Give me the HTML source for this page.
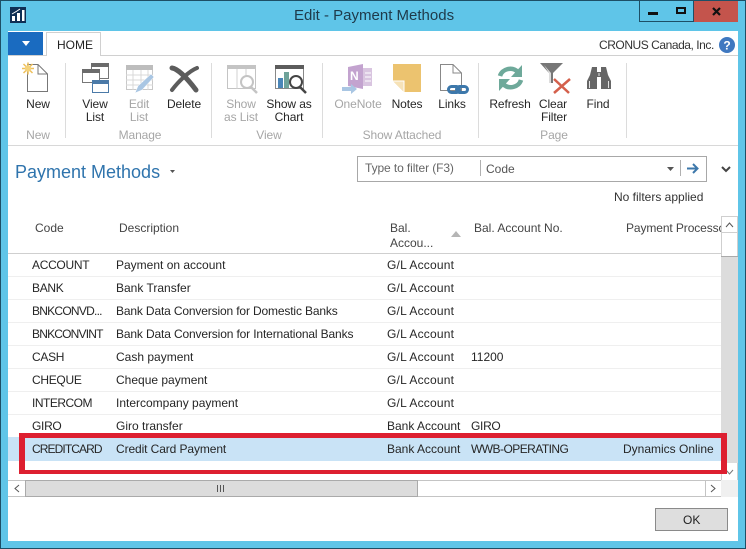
<!DOCTYPE html>
<html><head><meta charset="utf-8"><style>
html,body{margin:0;padding:0;width:746px;height:549px;overflow:hidden;background:#5fc5e8}
body{position:relative;font-family:"Liberation Sans",sans-serif;font-size:12px;color:#262626}
.a{position:absolute}
.t{position:absolute;white-space:nowrap;line-height:14px}
.c{position:absolute;white-space:nowrap;line-height:14px;text-align:center;transform:translateX(-50%);letter-spacing:-.1px}
.g{color:#a6a6a6}
.h{color:#444}
.r{position:absolute;left:8px;width:713px;height:1px;background:#efefef}
svg{position:absolute;overflow:visible}
</style></head><body>
<div class="a" style="left:0;top:0;width:744px;height:547px;border:1px solid #1d4f66"></div>
<div class="a" style="left:8px;top:31px;width:730px;height:510px;background:#fff"></div>

<svg style="left:10px;top:7px" width="16" height="16"><rect width="16" height="16" fill="#0f2f55"/><path d="M2 14V9H5V14ZM7 14V6H10V14ZM12 14V3H14.500V14Z" fill="#fff"/><path d="M2 7L7 4L10 2" stroke="#fff" fill="none"/></svg>
<div class="t" style="left:294px;top:7px;font-size:15px;line-height:18px;color:#1e3a4a">Edit - Payment Methods</div>

<div class="a" style="left:639px;top:1px;width:29px;height:20px;border:1px solid #1d4f66;border-top:0;background:#5fc5e8"></div>
<div class="a" style="left:648px;top:12px;width:10px;height:3px;background:#111"></div>
<div class="a" style="left:667px;top:1px;width:26px;height:20px;border:1px solid #1d4f66;border-top:0;border-left:0;background:#5fc5e8"></div>
<div class="a" style="left:676px;top:7px;width:6px;height:3px;border:2px solid #111"></div>
<div class="a" style="left:694px;top:1px;width:44px;height:21px;background:#c4544c"></div>
<svg style="left:712px;top:7px" width="9" height="9"><path d="M1 1L8 8M8 1L1 8" stroke="#111" stroke-width="2.200"/></svg>

<div class="a" style="left:8px;top:32px;width:35px;height:23px;background:#1a6bc0"></div>
<svg style="left:22px;top:41px" width="9" height="6"><path d="M0 0H8L4 5Z" fill="#fff"/></svg>
<div class="a" style="left:46px;top:32px;width:55px;height:24px;box-sizing:border-box;border:1px solid #d0d0d0;border-bottom:0;background:#fff;z-index:2"></div>
<div class="t" style="left:57px;top:38px;z-index:3;color:#222">HOME</div>
<div class="a" style="left:8px;top:55px;width:730px;height:1px;background:#d0d0d0"></div>
<div class="t" style="left:599px;top:38px;color:#333;letter-spacing:-.45px">CRONUS Canada, Inc.</div>
<svg style="left:719px;top:37px" width="16" height="16"><circle cx="8" cy="8" r="8" fill="#3f78c0"/><text x="8" y="12.500" font-size="12" font-weight="bold" fill="#fff" text-anchor="middle" font-family="Liberation Sans">?</text></svg>
<div class="a" style="left:8px;top:145px;width:730px;height:1px;background:#d8d8d8"></div>

<div class="a" style="left:65px;top:63px;width:1px;height:75px;background:#dcdcdc"></div>
<div class="a" style="left:211px;top:63px;width:1px;height:75px;background:#dcdcdc"></div>
<div class="a" style="left:322px;top:63px;width:1px;height:75px;background:#dcdcdc"></div>
<div class="a" style="left:478px;top:63px;width:1px;height:75px;background:#dcdcdc"></div>
<div class="a" style="left:626px;top:63px;width:1px;height:75px;background:#dcdcdc"></div>

<!-- New -->
<svg style="left:22px;top:62px" width="27" height="31"><path d="M5.500 2.500H16L25.500 12V29.500H5.500Z" fill="#fff" stroke="#777"/><path d="M16 2.500V12H25.500" fill="none" stroke="#777"/><g stroke="#eebf5a" stroke-width="1.500"><path d="M0 6.500H12M6 0.500V12.500M1.500 2L10.500 11M10.500 2L1.500 11"/></g><circle cx="6" cy="6.500" r="3.200" fill="#f4d27a"/></svg>
<!-- View List -->
<svg style="left:81px;top:62px" width="29" height="32"><rect x="10.500" y="1.500" width="17" height="15" fill="#fff" stroke="#777"/><rect x="10" y="1" width="18" height="4" fill="#6b6b6b"/><rect x="1.500" y="7.500" width="17" height="13" fill="#fff" stroke="#777"/><rect x="1" y="7" width="18" height="4" fill="#6b6b6b"/><rect x="11.500" y="18.500" width="16" height="12" fill="#fff" stroke="#4b7aa8"/><rect x="11" y="18" width="17" height="4" fill="#4b7aa8"/></svg>
<!-- Edit List -->
<svg style="left:125px;top:64px" width="30" height="30"><rect x="1.500" y="1.500" width="26" height="24" fill="#fff" stroke="#c8c8c8"/><rect x="1" y="1" width="27" height="5" fill="#bdbdbd"/><path d="M1 11H28M1 16H28M1 21H28M8 6V26M16 6V26M23 6V26" stroke="#d9d9d9"/><path d="M10 29L13 22L26 10L29 13L17 26Z" fill="#a9c6e3" stroke="#fff" stroke-width=".5"/></svg>
<!-- Delete -->
<svg style="left:170px;top:65px" width="29" height="27"><path d="M2 3C9 4 20 17 26 25" stroke="#5c5c5c" stroke-width="5" fill="none" stroke-linecap="round"/><path d="M27 3C19 6 8 17 2 25" stroke="#5c5c5c" stroke-width="4" fill="none" stroke-linecap="round"/></svg>
<!-- Show as List -->
<svg style="left:227px;top:64px" width="32" height="30"><rect x="0.500" y="1.500" width="28" height="23" fill="#fff" stroke="#c4c4c4"/><rect x="0" y="1" width="29" height="4" fill="#c4c4c4"/><path d="M10 5V25M19 5V25" stroke="#d0d0d0"/><circle cx="20" cy="18" r="6" fill="#fff" stroke="#c4c4c4" stroke-width="2"/><path d="M24 23L30 29" stroke="#c4c4c4" stroke-width="2.500"/></svg>
<!-- Show as Chart -->
<svg style="left:275px;top:64px" width="32" height="30"><rect x="0.500" y="1.500" width="28" height="23" fill="#fff" stroke="#888"/><rect x="0" y="1" width="29" height="4" fill="#5c5c5c"/><rect x="3" y="14" width="5" height="10" fill="#4b86b8"/><rect x="9" y="8" width="5" height="16" fill="#6fa39a"/><circle cx="21" cy="18" r="6" fill="#fff" stroke="#444" stroke-width="2"/><path d="M25 23L31 29" stroke="#444" stroke-width="2.500"/></svg>
<!-- OneNote -->
<svg style="left:341px;top:63px" width="32" height="31"><path d="M7 4L22 1V26L7 23Z" fill="#c3a3cf"/><rect x="22" y="5" width="9" height="18" fill="#d9c5e0"/><path d="M24 10H30M24 14H30M24 18H30" stroke="#fff"/><text x="9" y="17" font-size="12" font-weight="bold" fill="#fff" font-family="Liberation Sans">N</text><path d="M1 24H10V21L16 26L10 31V28H1Z" fill="#a9c6e3"/></svg>
<!-- Notes -->
<svg style="left:393px;top:64px" width="28" height="28"><path d="M0 0H28V28H11L0 17Z" fill="#ecc36f"/><path d="M0 17H11V28Z" fill="#f6e2b7"/><path d="M0 17H11V28" fill="none" stroke="#fff"/></svg>
<!-- Links -->
<svg style="left:439px;top:64px" width="30" height="31"><path d="M1.500 0.500H14L22.500 9V26.500H1.500Z" fill="#fff" stroke="#888"/><path d="M14 0.500V9H22.500" fill="none" stroke="#888"/><g fill="none" stroke="#3d78ab" stroke-width="3"><rect x="9.500" y="22.500" width="11" height="6" rx="3"/><rect x="17.500" y="22.500" width="11" height="6" rx="3"/></g></svg>
<!-- Refresh -->
<svg style="left:496px;top:64px" width="29" height="28"><g fill="none" stroke="#6ea99a" stroke-width="4.500"><path d="M4 12C6 5 16 2 22 8"/><path d="M25 16C23 23 13 26 7 20"/></g><path d="M26 1V13H15Z" fill="#6ea99a"/><path d="M3 27V15H14Z" fill="#6ea99a"/></svg>
<!-- Clear Filter -->
<svg style="left:539px;top:62px" width="33" height="33"><path d="M1 1H24L14 11V21H10V11Z" fill="#777"/><path d="M10 11V21H12V11L5 3Z" fill="#ddd"/><path d="M15 17L30 31M31 17L15 31" stroke="#d4604c" stroke-width="2.500"/></svg>
<!-- Find -->
<svg style="left:586px;top:66px" width="26" height="24"><path d="M6 1H11V6H15V1H20L22 9L25 15V23H15V11H11V23H1V15L4 9Z" fill="#666"/><path d="M3.500 15V22M22.500 15V22M13 7V10" stroke="#e2e2e2"/></svg>

<div class="c" style="left:38px;top:97px">New</div>
<div class="c" style="left:95px;top:97px">View</div><div class="c" style="left:95px;top:110px">List</div>
<div class="c g" style="left:139px;top:97px">Edit</div><div class="c g" style="left:139px;top:110px">List</div>
<div class="c" style="left:184px;top:97px">Delete</div>
<div class="c g" style="left:241px;top:97px">Show</div><div class="c g" style="left:241px;top:110px">as List</div>
<div class="c" style="left:289px;top:97px">Show as</div><div class="c" style="left:289px;top:110px">Chart</div>
<div class="c g" style="left:358px;top:97px">OneNote</div>
<div class="c" style="left:407px;top:97px">Notes</div>
<div class="c" style="left:452px;top:97px">Links</div>
<div class="c" style="left:510px;top:97px">Refresh</div>
<div class="c" style="left:553px;top:97px">Clear</div><div class="c" style="left:554px;top:110px">Filter</div>
<div class="c" style="left:598px;top:97px">Find</div>

<div class="c g" style="left:38px;top:128px">New</div>
<div class="c g" style="left:140px;top:128px">Manage</div>
<div class="c g" style="left:269px;top:128px">View</div>
<div class="c g" style="left:402px;top:128px">Show Attached</div>
<div class="c g" style="left:554px;top:128px">Page</div>

<div class="t" style="left:15px;top:161px;font-size:18px;line-height:22px;color:#2f74ad">Payment Methods</div>
<svg style="left:170px;top:170px" width="6" height="4"><path d="M0 0H5L2.500 3Z" fill="#555"/></svg>

<div class="a" style="left:357px;top:156px;width:348px;height:24px;border:1px solid #a8a8a8;background:#fff"></div>
<div class="a" style="left:480px;top:160px;width:1px;height:16px;background:#b0b0b0"></div>
<div class="a" style="left:680px;top:160px;width:1px;height:16px;background:#b0b0b0"></div>
<div class="t" style="left:365px;top:161px;color:#666;letter-spacing:-.1px">Type to filter (F3)</div>
<div class="t" style="left:486px;top:162px;color:#555">Code</div>
<svg style="left:667px;top:167px" width="8" height="5"><path d="M0 0H7L3.500 4Z" fill="#555"/></svg>
<svg style="left:687px;top:163px" width="12" height="11"><path d="M0 5.500H10M6 1L10.500 5.500L6 10" stroke="#3d78ab" stroke-width="2" fill="none"/></svg>
<svg style="left:721px;top:166px" width="10" height="7"><path d="M1 1L5 5L9 1" stroke="#444" stroke-width="2" fill="none"/></svg>
<div class="t" style="left:614px;top:190px;color:#333">No filters applied</div>

<div class="t h" style="left:35px;top:221px">Code</div>
<div class="t h" style="left:119px;top:221px">Description</div>
<div class="t h" style="left:390px;top:221px">Bal.</div>
<div class="t h" style="left:390px;top:236px">Accou...</div>
<svg style="left:451px;top:231px" width="10" height="6"><path d="M0 6L5 0L10 6Z" fill="#b5b5b5"/></svg>
<div class="t h" style="left:474px;top:221px">Bal. Account No.</div>
<div class="a" style="left:626px;top:221px;width:95px;height:14px;overflow:hidden"><div class="t h" style="left:0;top:0;letter-spacing:-.1px">Payment Processor</div></div>
<div class="a" style="left:8px;top:253px;width:713px;height:1px;background:#cfcfcf"></div>

<div class="r" style="top:276px"></div><div class="r" style="top:299px"></div><div class="r" style="top:322px"></div><div class="r" style="top:345px"></div><div class="r" style="top:368px"></div><div class="r" style="top:391px"></div><div class="r" style="top:414px"></div>
<div class="a" style="left:8px;top:437px;width:713px;height:24px;background:#c9e3f6"></div>

<div class="t" style="left:32px;top:258px;letter-spacing:-.3px">ACCOUNT</div><div class="t" style="left:116px;top:258px">Payment on account</div><div class="t" style="left:387px;top:258px;letter-spacing:.2px">G/L Account</div>
<div class="t" style="left:32px;top:281px;letter-spacing:-.3px">BANK</div><div class="t" style="left:116px;top:281px">Bank Transfer</div><div class="t" style="left:387px;top:281px;letter-spacing:.2px">G/L Account</div>
<div class="t" style="left:32px;top:304px;letter-spacing:-.75px">BNKCONVD...</div><div class="t" style="left:116px;top:304px;letter-spacing:-.15px">Bank Data Conversion for Domestic Banks</div><div class="t" style="left:387px;top:304px;letter-spacing:.2px">G/L Account</div>
<div class="t" style="left:32px;top:327px;letter-spacing:-.8px">BNKCONVINT</div><div class="t" style="left:116px;top:327px;letter-spacing:-.14px">Bank Data Conversion for International Banks</div><div class="t" style="left:387px;top:327px;letter-spacing:.2px">G/L Account</div>
<div class="t" style="left:32px;top:350px;letter-spacing:-.3px">CASH</div><div class="t" style="left:116px;top:350px">Cash payment</div><div class="t" style="left:387px;top:350px;letter-spacing:.2px">G/L Account</div><div class="t" style="left:471px;top:350px">11200</div>
<div class="t" style="left:32px;top:373px;letter-spacing:-.3px">CHEQUE</div><div class="t" style="left:116px;top:373px">Cheque payment</div><div class="t" style="left:387px;top:373px;letter-spacing:.2px">G/L Account</div>
<div class="t" style="left:32px;top:396px;letter-spacing:-.5px">INTERCOM</div><div class="t" style="left:116px;top:396px">Intercompany payment</div><div class="t" style="left:387px;top:396px;letter-spacing:.2px">G/L Account</div>
<div class="t" style="left:32px;top:419px;letter-spacing:-.3px">GIRO</div><div class="t" style="left:116px;top:419px">Giro transfer</div><div class="t" style="left:387px;top:419px">Bank Account</div><div class="t" style="left:471px;top:419px;letter-spacing:-.3px">GIRO</div>
<div class="t" style="left:32px;top:442px;letter-spacing:-.9px">CREDITCARD</div><div class="t" style="left:116px;top:442px;letter-spacing:-.1px">Credit Card Payment</div><div class="t" style="left:387px;top:442px">Bank Account</div><div class="t" style="left:471px;top:442px;letter-spacing:-.55px">WWB-OPERATING</div><div class="t" style="left:623px;top:442px">Dynamics Online</div>

<!-- vertical scrollbar -->
<div class="a" style="left:721px;top:216px;width:17px;height:264px;background:#fff;border:1px solid #cfcfcf;border-width:1px 1px 0 1px;box-sizing:border-box"></div>
<div class="a" style="left:721px;top:232px;width:17px;height:1px;background:#cfcfcf"></div>
<div class="a" style="left:721px;top:256px;width:17px;height:207px;background:#dcdcdc;border-top:1px solid #aaa;box-sizing:border-box"></div>
<svg style="left:725px;top:222px" width="9" height="6"><path d="M1 5L4.500 1L8 5" stroke="#555" fill="none"/></svg>
<svg style="left:725px;top:469px" width="9" height="6"><path d="M1 1L4.500 5L8 1" stroke="#777" fill="none"/></svg>

<!-- horizontal scrollbar -->
<div class="a" style="left:8px;top:480px;width:713px;height:17px;background:#fff;border:1px solid #c4c4c4;border-width:1px 0;box-sizing:border-box"></div>
<div class="a" style="left:25px;top:480px;width:393px;height:17px;background:#dcdcdc;border:1px solid #aaa;box-sizing:border-box"></div>
<div class="a" style="left:705px;top:480px;width:1px;height:17px;background:#c4c4c4"></div>
<div class="a" style="left:721px;top:480px;width:17px;height:17px;background:#f0f0f0"></div>
<svg style="left:14px;top:484px" width="6" height="9"><path d="M5 1L1 4.500L5 8" stroke="#555" fill="none"/></svg>
<svg style="left:710px;top:484px" width="6" height="9"><path d="M1 1L5 4.500L1 8" stroke="#555" fill="none"/></svg>
<div class="a" style="left:217px;top:485px;width:8px;height:7px;background:repeating-linear-gradient(90deg,#555 0 1px,transparent 1px 3px)"></div>

<!-- red box -->
<div class="a" style="left:19px;top:433px;width:696px;height:32px;border:solid #dd1f30;border-width:5px 6px 4px 6px"></div>

<div class="a" style="left:655px;top:508px;width:71px;height:21px;background:#dedede;border:1px solid #8a8a8a"></div>
<div class="t" style="left:683px;top:513px;color:#222">OK</div>
</body></html>
